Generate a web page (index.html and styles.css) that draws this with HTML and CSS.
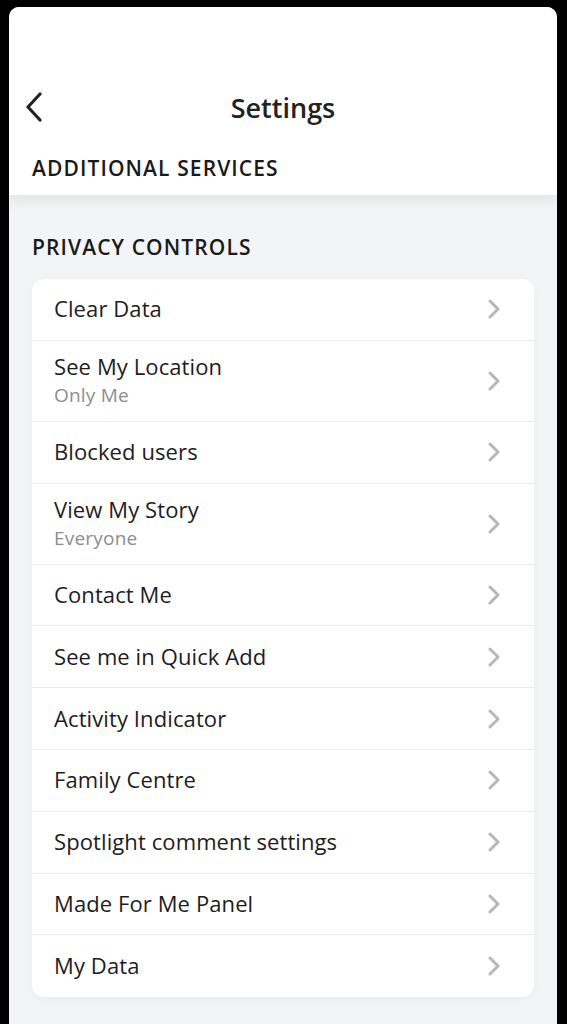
FILE: index.html
```html
<!DOCTYPE html>
<html>
<head>
<meta charset="utf-8">
<link rel="stylesheet" href="styles.css">
</head>
<body>
<div class="screen">
  <header class="header">
    <div class="nav">
      <svg class="back" width="18" height="30" viewBox="0 0 18 30"><path d="M15 2 L3 15 L15 28" fill="none" stroke="#222" stroke-width="3.2" stroke-linecap="round" stroke-linejoin="round"/></svg>
      <h1 class="title">Settings</h1>
    </div>
    <div class="section-label">ADDITIONAL SERVICES</div>
  </header>
  <main class="content">
    <div class="section-label gray">PRIVACY CONTROLS</div>
    <div class="card">
      <div class="row"><div class="text"><div class="main">Clear Data</div></div><svg class="chev" width="14" height="20" viewBox="0 0 14 20"><path d="M3 2 L11 10 L3 18" fill="none" stroke="#b5b7bb" stroke-width="3" stroke-linecap="round" stroke-linejoin="round"/></svg></div>
      <div class="row tall"><div class="text"><div class="main">See My Location</div><div class="sub">Only Me</div></div><svg class="chev" width="14" height="20" viewBox="0 0 14 20"><path d="M3 2 L11 10 L3 18" fill="none" stroke="#b5b7bb" stroke-width="3" stroke-linecap="round" stroke-linejoin="round"/></svg></div>
      <div class="row"><div class="text"><div class="main">Blocked users</div></div><svg class="chev" width="14" height="20" viewBox="0 0 14 20"><path d="M3 2 L11 10 L3 18" fill="none" stroke="#b5b7bb" stroke-width="3" stroke-linecap="round" stroke-linejoin="round"/></svg></div>
      <div class="row tall"><div class="text"><div class="main">View My Story</div><div class="sub">Everyone</div></div><svg class="chev" width="14" height="20" viewBox="0 0 14 20"><path d="M3 2 L11 10 L3 18" fill="none" stroke="#b5b7bb" stroke-width="3" stroke-linecap="round" stroke-linejoin="round"/></svg></div>
      <div class="row"><div class="text"><div class="main">Contact Me</div></div><svg class="chev" width="14" height="20" viewBox="0 0 14 20"><path d="M3 2 L11 10 L3 18" fill="none" stroke="#b5b7bb" stroke-width="3" stroke-linecap="round" stroke-linejoin="round"/></svg></div>
      <div class="row"><div class="text"><div class="main">See me in Quick Add</div></div><svg class="chev" width="14" height="20" viewBox="0 0 14 20"><path d="M3 2 L11 10 L3 18" fill="none" stroke="#b5b7bb" stroke-width="3" stroke-linecap="round" stroke-linejoin="round"/></svg></div>
      <div class="row"><div class="text"><div class="main">Activity Indicator</div></div><svg class="chev" width="14" height="20" viewBox="0 0 14 20"><path d="M3 2 L11 10 L3 18" fill="none" stroke="#b5b7bb" stroke-width="3" stroke-linecap="round" stroke-linejoin="round"/></svg></div>
      <div class="row"><div class="text"><div class="main">Family Centre</div></div><svg class="chev" width="14" height="20" viewBox="0 0 14 20"><path d="M3 2 L11 10 L3 18" fill="none" stroke="#b5b7bb" stroke-width="3" stroke-linecap="round" stroke-linejoin="round"/></svg></div>
      <div class="row"><div class="text"><div class="main">Spotlight comment settings</div></div><svg class="chev" width="14" height="20" viewBox="0 0 14 20"><path d="M3 2 L11 10 L3 18" fill="none" stroke="#b5b7bb" stroke-width="3" stroke-linecap="round" stroke-linejoin="round"/></svg></div>
      <div class="row"><div class="text"><div class="main">Made For Me Panel</div></div><svg class="chev" width="14" height="20" viewBox="0 0 14 20"><path d="M3 2 L11 10 L3 18" fill="none" stroke="#b5b7bb" stroke-width="3" stroke-linecap="round" stroke-linejoin="round"/></svg></div>
      <div class="row last"><div class="text"><div class="main">My Data</div></div><svg class="chev" width="14" height="20" viewBox="0 0 14 20"><path d="M3 2 L11 10 L3 18" fill="none" stroke="#b5b7bb" stroke-width="3" stroke-linecap="round" stroke-linejoin="round"/></svg></div>
    </div>
  </main>
</div>
</body>
</html>
```

FILE: styles.css
```css
html, body {
  margin: 0;
  padding: 0;
  background: #000;
  height: 1024px;
  overflow: hidden;
}
body {
  font-family: "Open Sans", Lato, "Liberation Sans", sans-serif;
  color: #1d1d1f;
}
.screen {
  margin: 7px 10px 0 9px;
  height: 1017px;
  border-radius: 10px 10px 0 0;
  overflow: hidden;
  background: #f3f4f6;
  display: flex;
  flex-direction: column;
}
.header {
  background: #fff;
  padding: 80px 0 13px 0;
  position: relative;
  z-index: 1;
  box-shadow: 0 6px 14px rgba(0, 0, 0, 0.07);
}
.nav {
  height: 40px;
  display: flex;
  align-items: center;
  justify-content: center;
  position: relative;
}
.back {
  position: absolute;
  left: 16px;
  top: 5px;
}
.title {
  margin: 0;
  font-size: 27px;
  font-weight: 600;
  color: #222;
}
.section-label {
  margin: 27px 0 0 23px;
  height: 28px;
  line-height: 28px;
  font-size: 21px;
  font-weight: 600;
  color: #1a1a1a;
  letter-spacing: 1.1px;
}
.content {
  padding: 0 23px 0 23px;
}
.section-label.gray {
  margin: 38px 0 0 0;
}
.card {
  margin-top: 18px;
  background: #fff;
  border-radius: 12px;
  box-shadow: 0 2px 10px rgba(0, 0, 0, 0.04);
}
.row {
  height: 61.8px;
  box-sizing: border-box;
  border-bottom: 1px solid #e9eaec;
  display: flex;
  align-items: center;
  padding: 0 33px 0 22px;
}
.row.tall {
  height: 81px;
}
.row.last {
  border-bottom: none;
}
.text {
  flex: 1;
  padding-bottom: 1px;
}
.main {
  font-size: 22px;
  line-height: 27px;
  letter-spacing: 0.1px;
  color: #1d1d1f;
}
.sub {
  font-size: 19px;
  line-height: 24px;
  letter-spacing: 0.2px;
  color: #8a8d92;
  margin-top: 3px;
}
.chev {
  flex: none;
}
```
